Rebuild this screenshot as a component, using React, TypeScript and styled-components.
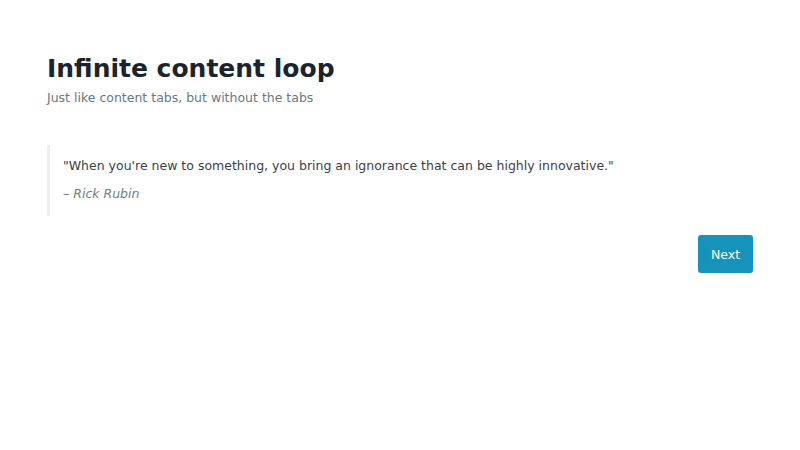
import React from 'react';
import styled, { createGlobalStyle } from 'styled-components';

const GlobalStyle = createGlobalStyle`
  body {
    margin: 0;
    background: #ffffff;
    font-family: 'DejaVu Sans', sans-serif;
  }
`;

const Page = styled.div`
  padding: 52px 47px;
`;

const Title = styled.h1`
  margin: 0;
  font-size: 25px;
  font-weight: bold;
  color: #1b242c;
  line-height: 34px;
`;

const Subtitle = styled.p`
  margin: 4px 0 0;
  font-size: 12.5px;
  color: #6b7780;
`;

const Quote = styled.blockquote`
  margin: 40px 0 0;
  padding: 12px 14px 13px 13px;
  border-left: 3px solid #eeeeee;
`;

const QuoteText = styled.p`
  margin: 0;
  font-size: 12.5px;
  line-height: 18px;
  color: #3a4047;
`;

const Author = styled.cite`
  display: block;
  margin-top: 10px;
  font-size: 12.5px;
  line-height: 18px;
  color: #737b82;
`;

const Actions = styled.div`
  display: flex;
  justify-content: flex-end;
  margin-top: 19px;
`;

const Button = styled.button`
  all: unset;
  width: 55px;
  height: 38px;
  display: flex;
  align-items: center;
  justify-content: center;
  background: #1593bb;
  color: #ffffff;
  border-radius: 3px;
  font-size: 12.5px;
  cursor: pointer;
`;

const quotes = [
  {
    text: '"When you\'re new to something, you bring an ignorance that can be highly innovative."',
    author: 'Rick Rubin',
  },
];

const App = () => {
  const [index, setIndex] = React.useState(0);
  const quote = quotes[index];

  return (
    <Page>
      <GlobalStyle />
      <Title>Infinite content loop</Title>
      <Subtitle>Just like content tabs, but without the tabs</Subtitle>
      <Quote>
        <QuoteText>{quote.text}</QuoteText>
        <Author>– {quote.author}</Author>
      </Quote>
      <Actions>
        <Button onClick={() => setIndex((index + 1) % quotes.length)}>Next</Button>
      </Actions>
    </Page>
  );
};

export default App;
